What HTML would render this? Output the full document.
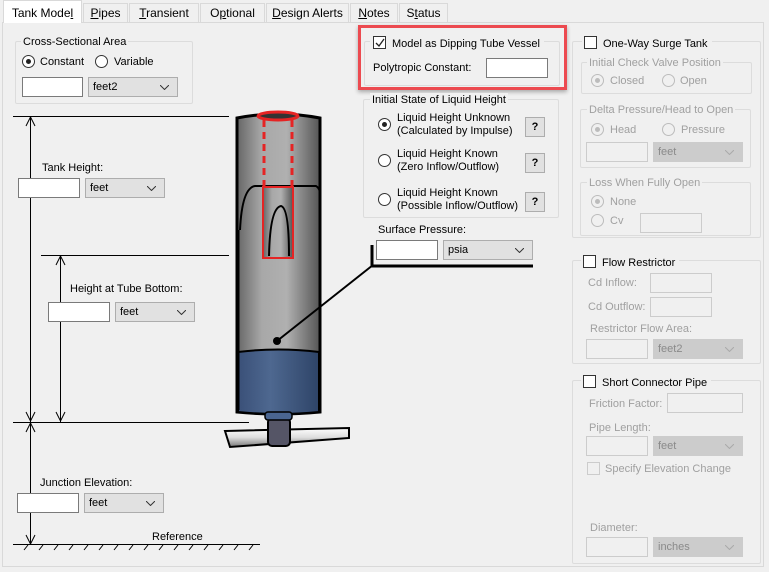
<!DOCTYPE html><html><head><style>
*{box-sizing:border-box;margin:0;padding:0}
body{width:769px;height:572px;background:#f0f0f0;font-family:"Liberation Sans",sans-serif;font-size:11px;color:#000;position:relative;overflow:hidden}
.a{position:absolute;white-space:nowrap;line-height:14px}
.tab{position:absolute;top:3px;height:19px;border:1px solid #d9d9d9;border-bottom:none;background:#f0f0f0;text-align:center;line-height:18px}
.grp{position:absolute;border:1px solid #dcdcdc;border-radius:2px}
.gt{position:absolute;background:#f0f0f0;padding:0 2px;line-height:14px;white-space:nowrap}
.in{position:absolute;height:20px;background:#fff;border:1px solid #7a7a7a}
.in.d{background:#f0f0f0;border-color:#ccc}
.sel{position:absolute;height:20px;background:#e1e1e1;border:1px solid #adadad;padding-left:4px;line-height:18px}
.sel.d{background:#cccccc;border-color:#ccc;color:#8a8a8a}
.sel svg{position:absolute;right:8px;top:7px}
.rad{position:absolute;width:13px;height:13px;border-radius:50%;border:1px solid #333;background:#fff}
.rad.on::after{content:"";position:absolute;left:3px;top:3px;width:5px;height:5px;border-radius:50%;background:#222}
.rad.d{border-color:#bcbcbc;background:#f0f0f0}
.rad.d.on::after{background:#bcbcbc}
.cb{position:absolute;width:13px;height:13px;border:1px solid #333;background:#fff}
.cb.d{border-color:#ccc;background:#f0f0f0}
.g{color:#a0a0a0}
.q{position:absolute;width:20px;height:20px;border:1px solid #adadad;background:#e1e1e1;font-weight:bold;text-align:center;line-height:18px}
</style></head><body>
<div style="position:absolute;left:2px;top:22px;width:762px;height:545px;border:1px solid #d9d9d9;background:#f0f0f0"></div>
<div class="tab" style="left:83px;width:45px;font-size:12px"><u>P</u>ipes</div>
<div class="tab" style="left:129px;width:70px;font-size:12px"><u>T</u>ransient</div>
<div class="tab" style="left:200px;width:65px;font-size:12px">O<u>p</u>tional</div>
<div class="tab" style="left:266px;width:83px;font-size:12px"><u>D</u>esign Alerts</div>
<div class="tab" style="left:350px;width:48px;font-size:12px"><u>N</u>otes</div>
<div class="tab" style="left:399px;width:49px;font-size:12px">S<u>t</u>atus</div>
<div class="tab" style="left:3px;top:0;width:79px;height:23px;background:#fff;border-color:#d9d9d9;line-height:24px;z-index:2;font-size:12px">Tank Mode<u>l</u></div>

<div class="grp" style="left:15px;top:41px;width:178px;height:63px"></div>
<div class="gt" style="left:21px;top:35px">Cross-Sectional Area</div>
<div class="rad on" style="left:22px;top:55px"></div><div class="a" style="left:40px;top:55px">Constant</div>
<div class="rad" style="left:95px;top:55px"></div><div class="a" style="left:114px;top:55px">Variable</div>
<div class="in" style="left:22px;top:77px;width:61px"></div>
<div class="sel" style="left:88px;top:77px;width:90px">feet2<svg width="9" height="5"><path d="M0 0L4.5 4.5L9 0" fill="none" stroke="#333"/></svg></div>

<svg style="position:absolute;left:0;top:0" width="769" height="572">
<g stroke="#000" stroke-width="1" fill="none">
<path d="M13 116.5H229M41 255.5H229M13 422.5H249M13 544.5H260"/>
<path d="M30.5 116V544M60.5 255V422"/>
<path d="M26 126L30.5 117L35 126M56 265L60.5 256L65 265M26 412L30.5 421L35 412M56 412L60.5 421L65 412M26 432L30.5 423L35 432M26 535L30.5 544L35 535"/>
<path d="M24 550l4-5M39 550l4-5M54 550l4-5M69 550l4-5M84 550l4-5M99 550l4-5M114 550l4-5M129 550l4-5M144 550l4-5M159 550l4-5M174 550l4-5M189 550l4-5M204 550l4-5M219 550l4-5M234 550l4-5M249 550l4-5"/>
<path d="M372 245V266H533" stroke-width="3"/>
</g>
<defs>
<linearGradient id="cy" x1="0" x2="1"><stop offset="0" stop-color="#666"/><stop offset=".3" stop-color="#a8a8a8"/><stop offset=".6" stop-color="#b0b0b0"/><stop offset="1" stop-color="#555"/></linearGradient>
<linearGradient id="wb" x1="0" x2="1"><stop offset="0" stop-color="#3a5078"/><stop offset=".4" stop-color="#4e6890"/><stop offset="1" stop-color="#2e4468"/></linearGradient>
<linearGradient id="pp" x1="0" y1="0" x2="0" y2="1"><stop offset="0" stop-color="#fff"/><stop offset=".5" stop-color="#ddd"/><stop offset="1" stop-color="#777"/></linearGradient>
</defs>
<path d="M237 118Q278 110 320 118V412Q278 416 237 412Z" fill="url(#cy)" stroke="#000" stroke-width="3"/>
<path d="M238 352Q278 347 319 352V412Q278 416 238 412Z" fill="url(#wb)" stroke="#000" stroke-width="2"/>
<path d="M240 230Q242 188 255 186H316Q320 188 320 195V410" fill="none" stroke="#000" stroke-width="2"/>
<path d="M238 230V410" stroke="#000" stroke-width="3"/>
<rect x="263" y="187" width="30" height="71" fill="url(#cy)"/>
<path d="M269 256Q270 208 281 206Q289 208 289 256" fill="none" stroke="#000" stroke-width="2"/>
<rect x="263" y="187" width="30" height="71" fill="none" stroke="#e52424" stroke-width="2"/>
<path d="M264 120V186M292 120V186" stroke="#e52424" stroke-width="3" stroke-dasharray="7,5"/>
<ellipse cx="278" cy="116" rx="20" ry="4" fill="#333" stroke="#e52424" stroke-width="3"/>
<path d="M373 265L277 341" stroke="#000" stroke-width="2"/>
<circle cx="277" cy="341" r="4" fill="#000"/>
<path d="M225 431L349 428V438L230 447Z" fill="url(#pp)" stroke="#000" stroke-width="2"/>
<rect x="268" y="418" width="22" height="28" rx="4" fill="#556" stroke="#000" stroke-width="2"/>
<rect x="265" y="412" width="27" height="8" rx="3" fill="#4a6590" stroke="#000" stroke-width="1.5"/>
</svg>
<div class="a" style="left:42px;top:161px">Tank Height:</div>
<div class="in" style="left:18px;top:178px;width:62px"></div>
<div class="sel" style="left:85px;top:178px;width:80px">feet<svg width="9" height="5"><path d="M0 0L4.5 4.5L9 0" fill="none" stroke="#333"/></svg></div>
<div class="a" style="left:70px;top:282px">Height at Tube Bottom:</div>
<div class="in" style="left:48px;top:302px;width:62px"></div>
<div class="sel" style="left:115px;top:302px;width:80px">feet<svg width="9" height="5"><path d="M0 0L4.5 4.5L9 0" fill="none" stroke="#333"/></svg></div>
<div class="a" style="left:40px;top:476px">Junction Elevation:</div>
<div class="in" style="left:17px;top:493px;width:62px"></div>
<div class="sel" style="left:84px;top:493px;width:80px">feet<svg width="9" height="5"><path d="M0 0L4.5 4.5L9 0" fill="none" stroke="#333"/></svg></div>
<div class="a" style="left:152px;top:530px">Reference</div>

<div style="position:absolute;left:358px;top:25px;width:209px;height:65px;border:3px solid #ec4a50;box-shadow:0 2px 4px rgba(0,0,0,.3)"></div>
<div class="grp" style="left:364px;top:41px;width:196px;height:45px"></div>
<div class="gt" style="left:370px;top:34px;padding-right:4px"><span class="cb" style="position:relative;display:inline-block;left:1px;top:2px;margin-right:7px"><svg style="position:absolute;left:1px;top:1px" width="10" height="10"><path d="M1 5L4 8L9 1" fill="none" stroke="#222" stroke-width="1.3"/></svg></span>Model as Dipping Tube Vessel</div>
<div class="a" style="left:373px;top:61px">Polytropic Constant:</div>
<div class="in" style="left:486px;top:58px;width:62px"></div>

<div class="grp" style="left:363px;top:99px;width:196px;height:119px"></div>
<div class="gt" style="left:370px;top:93px">Initial State of Liquid Height</div>
<div class="rad on" style="left:378px;top:118px"></div><div class="a" style="left:397px;top:112px;line-height:13px">Liquid Height Unknown<br>(Calculated by Impulse)</div>
<div class="q" style="left:525px;top:117px">?</div>
<div class="rad" style="left:378px;top:154px"></div><div class="a" style="left:397px;top:148px;line-height:13px">Liquid Height Known<br>(Zero Inflow/Outflow)</div>
<div class="q" style="left:525px;top:153px">?</div>
<div class="rad" style="left:378px;top:193px"></div><div class="a" style="left:397px;top:187px;line-height:13px">Liquid Height Known<br>(Possible Inflow/Outflow)</div>
<div class="q" style="left:525px;top:192px">?</div>
<div class="a" style="left:378px;top:223px">Surface Pressure:</div>
<div class="in" style="left:376px;top:240px;width:62px"></div>
<div class="sel" style="left:443px;top:240px;width:90px">psia<svg width="9" height="5"><path d="M0 0L4.5 4.5L9 0" fill="none" stroke="#333"/></svg></div>

<div class="grp" style="left:572px;top:41px;width:189px;height:197px"></div>
<div class="gt" style="left:582px;top:34px;padding-right:4px"><span class="cb" style="position:relative;display:inline-block;top:2px;margin-right:6px"></span>One-Way Surge Tank</div>
<div class="grp" style="left:581px;top:62px;width:171px;height:32px"></div>
<div class="gt g" style="left:587px;top:56px">Initial Check Valve Position</div>
<div class="rad d on" style="left:591px;top:74px"></div><div class="a g" style="left:610px;top:74px">Closed</div>
<div class="rad d" style="left:662px;top:74px"></div><div class="a g" style="left:680px;top:74px">Open</div>
<div class="grp" style="left:580px;top:109px;width:171px;height:59px"></div>
<div class="gt g" style="left:587px;top:103px">Delta Pressure/Head to Open</div>
<div class="rad d on" style="left:591px;top:123px"></div><div class="a g" style="left:610px;top:123px">Head</div>
<div class="rad d" style="left:662px;top:123px"></div><div class="a g" style="left:681px;top:123px">Pressure</div>
<div class="in d" style="left:586px;top:142px;width:62px"></div>
<div class="sel d" style="left:653px;top:142px;width:90px">feet<svg width="9" height="5"><path d="M0 0L4.5 4.5L9 0" fill="none" stroke="#aaa"/></svg></div>
<div class="grp" style="left:580px;top:182px;width:171px;height:54px"></div>
<div class="gt g" style="left:587px;top:176px">Loss When Fully Open</div>
<div class="rad d on" style="left:591px;top:195px"></div><div class="a g" style="left:610px;top:195px">None</div>
<div class="rad d" style="left:591px;top:214px"></div><div class="a g" style="left:610px;top:214px">Cv</div>
<div class="in d" style="left:640px;top:213px;width:62px"></div>

<div class="grp" style="left:572px;top:260px;width:189px;height:104px"></div>
<div class="gt" style="left:581px;top:253px;padding-right:4px"><span class="cb" style="position:relative;display:inline-block;top:2px;margin-right:6px"></span>Flow Restrictor</div>
<div class="a g" style="left:588px;top:276px">Cd Inflow:</div><div class="in d" style="left:650px;top:273px;width:62px"></div>
<div class="a g" style="left:588px;top:300px">Cd Outflow:</div><div class="in d" style="left:650px;top:297px;width:62px"></div>
<div class="a g" style="left:590px;top:322px">Restrictor Flow Area:</div>
<div class="in d" style="left:586px;top:339px;width:62px"></div>
<div class="sel d" style="left:653px;top:339px;width:90px">feet2<svg width="9" height="5"><path d="M0 0L4.5 4.5L9 0" fill="none" stroke="#aaa"/></svg></div>

<div class="grp" style="left:572px;top:380px;width:189px;height:184px"></div>
<div class="gt" style="left:581px;top:373px;padding-right:4px"><span class="cb" style="position:relative;display:inline-block;top:2px;margin-right:6px"></span>Short Connector Pipe</div>
<div class="a g" style="left:589px;top:397px">Friction Factor:</div><div class="in d" style="left:667px;top:393px;width:76px"></div>
<div class="a g" style="left:589px;top:421px">Pipe Length:</div>
<div class="in d" style="left:586px;top:436px;width:62px"></div>
<div class="sel d" style="left:653px;top:436px;width:90px">feet<svg width="9" height="5"><path d="M0 0L4.5 4.5L9 0" fill="none" stroke="#aaa"/></svg></div>
<div class="cb d" style="left:587px;top:462px"></div><div class="a g" style="left:605px;top:462px">Specify Elevation Change</div>
<div class="a g" style="left:590px;top:521px">Diameter:</div>
<div class="in d" style="left:586px;top:537px;width:62px"></div>
<div class="sel d" style="left:653px;top:537px;width:90px">inches<svg width="9" height="5"><path d="M0 0L4.5 4.5L9 0" fill="none" stroke="#aaa"/></svg></div>
</body></html>
